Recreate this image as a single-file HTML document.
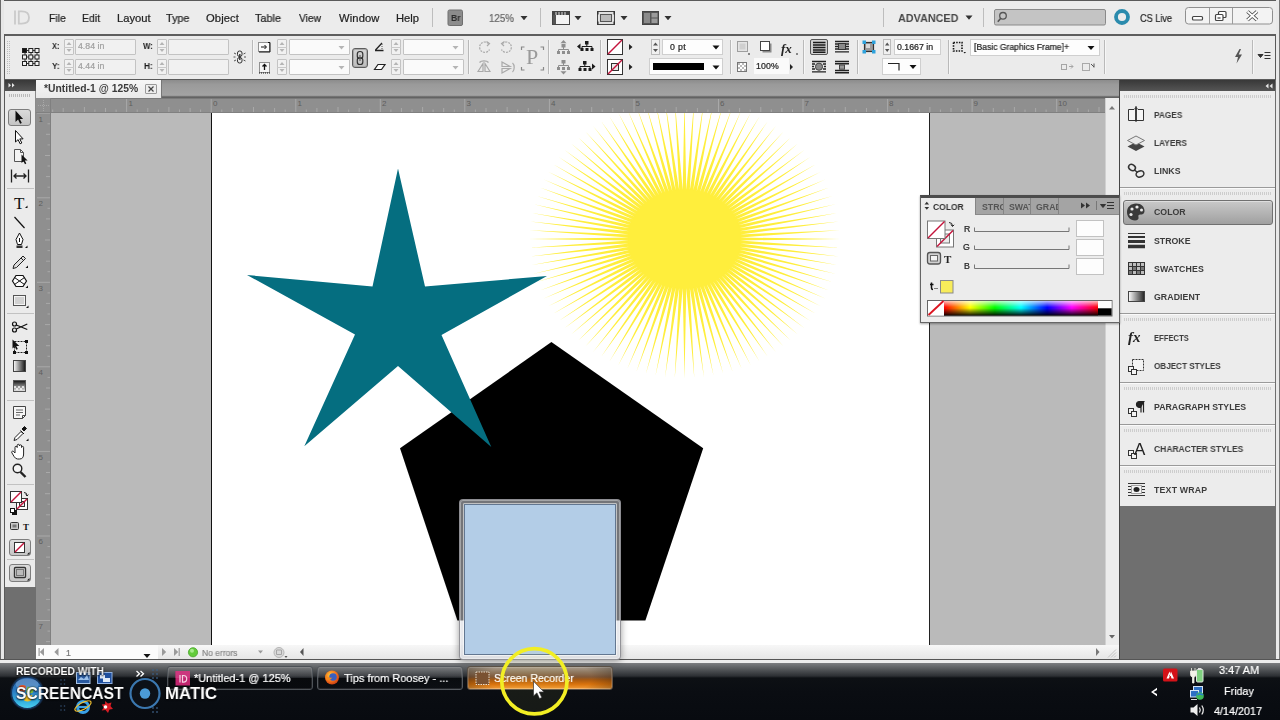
<!DOCTYPE html>
<html lang="en"><head><meta charset="utf-8"><title>Untitled-1 @ 125% - InDesign</title>
<style>
html,body{margin:0;padding:0;}
body{width:1280px;height:720px;overflow:hidden;position:relative;background:#bababa;font-family:"Liberation Sans",sans-serif;color:#2b2b2b;}
.a{position:absolute;display:block;}
.t{position:absolute;white-space:pre;line-height:1;display:block;color:#1f1f1f;transform-origin:0 50%;will-change:transform;}
svg{position:absolute;overflow:visible;}
.fld{position:absolute;box-sizing:border-box;border:1px solid #c3c3c3;background:#f1f1f1;border-radius:1px;}
.fldw{position:absolute;box-sizing:border-box;border:1px solid #cfcfcf;background:#fdfdfd;}
.vsep{position:absolute;width:1px;background:#b9b9b9;box-shadow:1px 0 0 #f6f6f6;}
</style></head><body>
<!-- document area -->
<div class="a" style="left:50px;top:112px;width:1056px;height:534px;background:#bababa;overflow:hidden;">
  <!-- page -->
  <div class="a" style="left:161px;top:1px;width:717px;height:560px;background:#fff;border-left:1px solid #111;border-right:1px solid #222;"></div>
</div>
<svg width="1280" height="720" viewBox="0 0 1280 720" style="left:0;top:0;">
  <defs><clipPath id="docclip"><rect x="50" y="113" width="1056" height="532"/></clipPath><filter id="soft" x="-5%" y="-5%" width="110%" height="110%"><feGaussianBlur stdDeviation="0.55"/></filter></defs>
  <g clip-path="url(#docclip)">
    <polygon fill="#ffee3c" filter="url(#soft)" points="684.5,99.5 686.3,190.0 694.3,99.8 689.8,190.2 704.0,100.6 693.3,190.6 713.6,102.0 696.7,191.2 723.2,103.9 700.1,191.9 732.6,106.3 703.5,192.9 741.7,109.3 706.7,194.0 750.7,112.8 709.9,195.3 759.4,116.8 713.0,196.8 767.8,121.2 716.0,198.5 775.9,126.1 718.8,200.3 783.6,131.5 721.5,202.2 790.9,137.3 724.1,204.4 797.9,143.5 726.5,206.6 804.3,150.1 728.7,209.0 810.3,157.0 730.8,211.5 815.8,164.3 732.7,214.1 820.8,171.8 734.4,216.8 825.2,179.6 735.9,219.5 829.1,187.6 737.2,222.4 832.4,195.9 738.3,225.3 835.1,204.3 739.2,228.3 837.2,212.9 739.8,231.3 838.8,221.5 740.3,234.4 839.7,230.2 740.5,237.5 840.0,239.0 740.5,240.5 839.7,247.8 740.3,243.6 838.8,256.5 739.8,246.7 837.2,265.1 739.2,249.7 835.1,273.7 738.3,252.7 832.4,282.1 737.2,255.6 829.1,290.4 735.9,258.5 825.2,298.4 734.4,261.2 820.8,306.2 732.7,263.9 815.8,313.7 730.8,266.5 810.3,321.0 728.7,269.0 804.3,327.9 726.5,271.4 797.9,334.5 724.1,273.6 790.9,340.7 721.5,275.8 783.6,346.5 718.8,277.7 775.9,351.9 716.0,279.5 767.8,356.8 713.0,281.2 759.4,361.2 709.9,282.7 750.7,365.2 706.7,284.0 741.7,368.7 703.5,285.1 732.6,371.7 700.1,286.1 723.2,374.1 696.7,286.8 713.6,376.0 693.3,287.4 704.0,377.4 689.8,287.8 694.3,378.2 686.3,288.0 684.5,378.5 682.7,288.0 674.7,378.2 679.2,287.8 665.0,377.4 675.7,287.4 655.4,376.0 672.3,286.8 645.8,374.1 668.9,286.1 636.4,371.7 665.5,285.1 627.3,368.7 662.3,284.0 618.3,365.2 659.1,282.7 609.6,361.2 656.0,281.2 601.2,356.8 653.0,279.5 593.1,351.9 650.2,277.7 585.4,346.5 647.5,275.8 578.1,340.7 644.9,273.6 571.1,334.5 642.5,271.4 564.7,327.9 640.3,269.0 558.7,321.0 638.2,266.5 553.2,313.7 636.3,263.9 548.2,306.2 634.6,261.2 543.8,298.4 633.1,258.5 539.9,290.4 631.8,255.6 536.6,282.1 630.7,252.7 533.9,273.7 629.8,249.7 531.8,265.1 629.2,246.7 530.2,256.5 628.7,243.6 529.3,247.8 628.5,240.5 529.0,239.0 628.5,237.5 529.3,230.2 628.7,234.4 530.2,221.5 629.2,231.3 531.8,212.9 629.8,228.3 533.9,204.3 630.7,225.3 536.6,195.9 631.8,222.4 539.9,187.6 633.1,219.5 543.8,179.6 634.6,216.8 548.2,171.8 636.3,214.1 553.2,164.3 638.2,211.5 558.7,157.0 640.3,209.0 564.7,150.1 642.5,206.6 571.1,143.5 644.9,204.4 578.1,137.3 647.5,202.2 585.4,131.5 650.2,200.3 593.1,126.1 653.0,198.5 601.2,121.2 656.0,196.8 609.6,116.8 659.1,195.3 618.3,112.8 662.3,194.0 627.3,109.3 665.5,192.9 636.4,106.3 668.9,191.9 645.8,103.9 672.3,191.2 655.4,102.0 675.7,190.6 665.0,100.6 679.2,190.2 674.7,99.8 682.7,190.0"/>
    <ellipse cx="684.5" cy="239" rx="56.5" ry="49.5" fill="#ffee3c"/>
    <polygon fill="#000" points="551.4,342.1 703.2,448.3 645.4,620.6 457.4,620.6 400,448.3"/>
    <polygon fill="#056e80" points="398,168.500 425,286.500 547,276 441.500,335 491.300,447 398,366 304.300,446.300 355,334.600 247,275 372.500,286.500"/>
  </g>
</svg>
<!-- rulers -->
<div class="a" style="left:36px;top:98px;width:1070px;height:14px;background:#8f8f8f;border-top:1px solid #7a7a7a;box-sizing:border-box;"></div>
<div class="a" style="left:36px;top:98px;width:14px;height:548px;background:#8f8f8f;"></div>
<svg width="1280" height="720" viewBox="0 0 1280 720" style="left:0;top:0;">
  <path d="M52.7 112v-2.5M63.2 112v-4M73.8 112v-2.5M84.4 112v-5M94.9 112v-2.5M105.5 112v-4M116.1 112v-2.5M126.6 112v-13M137.2 112v-2.5M147.8 112v-4M158.4 112v-2.5M168.9 112v-5M179.5 112v-2.5M190.1 112v-4M200.6 112v-2.5M211.2 112v-13M221.8 112v-2.5M232.3 112v-4M242.9 112v-2.5M253.5 112v-5M264.0 112v-2.5M274.6 112v-4M285.2 112v-2.5M295.8 112v-13M306.3 112v-2.5M316.9 112v-4M327.5 112v-2.5M338.0 112v-5M348.6 112v-2.5M359.2 112v-4M369.7 112v-2.5M380.3 112v-13M390.9 112v-2.5M401.4 112v-4M412.0 112v-2.5M422.6 112v-5M433.1 112v-2.5M443.7 112v-4M454.3 112v-2.5M464.8 112v-13M475.4 112v-2.5M486.0 112v-4M496.6 112v-2.5M507.1 112v-5M517.7 112v-2.5M528.3 112v-4M538.8 112v-2.5M549.4 112v-13M560.0 112v-2.5M570.5 112v-4M581.1 112v-2.5M591.7 112v-5M602.2 112v-2.5M612.8 112v-4M623.4 112v-2.5M634.0 112v-13M644.5 112v-2.5M655.1 112v-4M665.7 112v-2.5M676.2 112v-5M686.8 112v-2.5M697.4 112v-4M707.9 112v-2.5M718.5 112v-13M729.1 112v-2.5M739.6 112v-4M750.2 112v-2.5M760.8 112v-5M771.3 112v-2.5M781.9 112v-4M792.5 112v-2.5M803.0 112v-13M813.6 112v-2.5M824.2 112v-4M834.8 112v-2.5M845.3 112v-5M855.9 112v-2.5M866.5 112v-4M877.0 112v-2.5M887.6 112v-13M898.2 112v-2.5M908.7 112v-4M919.3 112v-2.5M929.9 112v-5M940.4 112v-2.5M951.0 112v-4M961.6 112v-2.5M972.1 112v-13M982.7 112v-2.5M993.3 112v-4M1003.9 112v-2.5M1014.4 112v-5M1025.0 112v-2.5M1035.6 112v-4M1046.1 112v-2.5M1056.7 112v-13M1067.3 112v-2.5M1077.8 112v-4M1088.4 112v-2.5M1099.0 112v-5" stroke="#a9a9a9" stroke-width="1" fill="none"/>
  <path d="M50 113.2h-13M50 123.8h-2.5M50 134.3h-4M50 144.9h-2.5M50 155.5h-5M50 166.0h-2.5M50 176.6h-4M50 187.2h-2.5M50 197.8h-13M50 208.3h-2.5M50 218.9h-4M50 229.5h-2.5M50 240.0h-5M50 250.6h-2.5M50 261.2h-4M50 271.7h-2.5M50 282.3h-13M50 292.9h-2.5M50 303.4h-4M50 314.0h-2.5M50 324.6h-5M50 335.1h-2.5M50 345.7h-4M50 356.3h-2.5M50 366.8h-13M50 377.4h-2.5M50 388.0h-4M50 398.6h-2.5M50 409.1h-5M50 419.7h-2.5M50 430.3h-4M50 440.8h-2.5M50 451.4h-13M50 462.0h-2.5M50 472.5h-4M50 483.1h-2.5M50 493.7h-5M50 504.2h-2.5M50 514.8h-4M50 525.4h-2.5M50 536.0h-13M50 546.5h-2.5M50 557.1h-4M50 567.7h-2.5M50 578.2h-5M50 588.8h-2.5M50 599.4h-4M50 609.9h-2.5M50 620.5h-13M50 631.1h-2.5M50 641.6h-4" stroke="#a9a9a9" stroke-width="1" fill="none"/>
  <path d="M36 112.5H1106M50.5 98V646" stroke="#808080" stroke-width="1" fill="none"/>
  <path d="M38 105.5h11M43.5 100v11" stroke="#a8a8a8" stroke-width="1" stroke-dasharray="1 1" fill="none"/>
  <g font-family="Liberation Sans, sans-serif" font-size="8" fill="#5e5e5e">
    <text x="128.5" y="106">1</text><text x="213" y="106">0</text><text x="297.5" y="106">1</text><text x="382" y="106">2</text>
    <text x="466.5" y="106">3</text><text x="551" y="106">4</text><text x="635.5" y="106">5</text><text x="720" y="106">6</text>
    <text x="804.5" y="106">7</text><text x="889" y="106">8</text><text x="973.5" y="106">9</text><text x="1058" y="106">10</text>
    <text x="38.5" y="122">1</text><text x="38.5" y="206">2</text><text x="38.5" y="291">3</text><text x="38.5" y="375">4</text>
    <text x="38.5" y="460">5</text><text x="38.5" y="544">6</text><text x="38.5" y="629">7</text>
  </g>
</svg>
<!-- vertical scrollbar -->
<div class="a" style="left:1105px;top:98px;width:14px;height:548px;background:#ececec;border-left:1px solid #d0d0d0;box-sizing:border-box;"></div>
<svg width="14" height="548" style="left:1105px;top:98px;"><path d="M4 11.5l3-3.5 3 3.5z" fill="#777"/><path d="M4 537l3 3.5 3-3.5z" fill="#666"/></svg>
<!-- status / horizontal scrollbar -->
<div class="a" style="left:36px;top:645px;width:1083px;height:14px;background:linear-gradient(#f7f7f7,#e6e6e6);"></div>
<div class="a" style="left:36px;top:645px;width:122px;height:14px;background:#fbfbfb;"></div>
<svg width="1280" height="720" viewBox="0 0 1280 720" style="left:0;top:0;">
  <g fill="#9a9a9a">
    <path d="M38.5 648v8h1.2v-8zM44 648v8l-4.2-4z"/>
    <path d="M58.5 648v8l-4.2-4z"/>
    <path d="M162 648v8l4.2-4z"/>
    <path d="M174 648v8l4.2-4zM178.6 648v8h1.2v-8z"/>
    <path d="M300 652l3.5-4v8z" fill="#555"/>
    <path d="M1096 648v8l3.5-4z" fill="#777"/>
    <path d="M258 650.5h5l-2.5 3z"/>
  </g>
  <path d="M143.5 654h7l-3.5 4z" fill="#111"/>
  <circle cx="193" cy="652.3" r="4.600" fill="#62cb3a" stroke="#4aa42c" stroke-width=".8"/>
  <circle cx="192" cy="650.800" r="2" fill="#a6ea8c"/>
  <circle cx="279" cy="652.5" r="5" fill="#d9d9d9" stroke="#b5b5b5"/>
  <path d="M276.5 650h5v4.5h-5z" fill="none" stroke="#a5a5a5"/>
  <path d="M284.5 656h3l-1.5 2z" fill="#555"/>
  <path d="M1108 657.5l8-8M1111 657.5l5-5M1114 657.5l2-2" stroke="#c2c2c2" stroke-width="1"/>
</svg>
<!-- window chrome: menu bar -->
<div class="a" style="left:0;top:0;width:1280px;height:35px;background:#ececec;border-top:1px solid #5a5a5a;box-sizing:border-box;"></div>
<div class="a" style="left:0;top:34px;width:1280px;height:2px;background:#5e5e5e;"></div>
<!-- control panel -->
<div class="a" style="left:0;top:36px;width:1280px;height:43px;background:#ebebeb;"></div>
<div class="a" style="left:0;top:79px;width:1280px;height:1px;background:#5a5a5a;"></div>
<!-- tab bar -->
<div class="a" style="left:0;top:80px;width:1280px;height:18px;background:linear-gradient(#8c8c8c 0,#9a9a9a 25%,#a3a3a3 85%,#6a6a6a 93%,#5e5e5e 100%);"></div>
<div class="a" style="left:36px;top:80px;width:126px;height:18px;background:linear-gradient(#f6f6f6,#e9e9e9);border-right:1px solid #777;box-sizing:border-box;"></div>
<div class="a" style="left:145px;top:84px;width:12px;height:10px;border:1px solid #9a9a9a;box-sizing:border-box;background:#ededed;border-radius:1px;"></div>
<svg width="12" height="10" style="left:145px;top:84px;"><path d="M3.5 2.5l5 5M8.5 2.5l-5 5" stroke="#444" stroke-width="1.2"/></svg>
<!-- left/right window borders -->
<div class="a" style="left:0;top:0;width:4px;height:663px;background:#e6e6e6;border-left:1px solid #6a6a6a;box-sizing:border-box;"></div>
<div class="a" style="left:4px;top:35px;width:1px;height:625px;background:#5a5a5a;"></div>
<div class="a" style="left:1276px;top:0;width:4px;height:663px;background:#e9e9e9;border-right:1px solid #777;box-sizing:border-box;"></div>
<div class="a" style="left:1275px;top:35px;width:1px;height:625px;background:#5a5a5a;"></div>
<div class="a" style="left:0;top:659px;width:1280px;height:1px;background:#555;"></div>
<div class="a" style="left:0;top:660px;width:1280px;height:3px;background:#ececec;"></div>

<!-- menu bar widgets -->
<svg width="1280" height="36" viewBox="0 0 1280 36" style="left:0;top:0;">
  <!-- ID logo -->
  <g fill="none" stroke="#cacaca" stroke-width="1.8"><path d="M15 10.500v14"/><path d="M18.800 11.400h3c5.500 0 7.200 2.900 7.200 6.100s-1.700 6.100-7.200 6.100h-3z"/></g>
  <!-- separators -->
  <g stroke="#bdbdbd"><path d="M432.500 8v19M540.500 8v19M883.500 8v19M983.500 8v19"/></g>
  <!-- Br -->
  <rect x="448" y="10" width="14.500" height="15.500" rx="1.500" fill="#8c8c8c" stroke="#6f6f6f"/>
  <!-- dropdown arrows -->
  <g fill="#333"><path d="M520.500 16h7l-3.500 4.200zM574.500 16h7l-3.500 4.200zM620.500 16h7l-3.500 4.200zM664.500 16h7l-3.500 4.200zM965.500 15.500h7l-3.500 4.200z"/></g>
  <!-- view options icon -->
  <g><rect x="552.500" y="11.500" width="17" height="13" fill="#f4f4f4" stroke="#444"/><rect x="553" y="12" width="16" height="3" fill="#444"/><path d="M556 12v3M559 12v3M562 12v3M565 12v3" stroke="#ddd"/><rect x="553" y="15" width="3" height="9" fill="#555"/></g>
  <!-- screen mode icon -->
  <g><rect x="597.500" y="11.500" width="17" height="13" fill="#e0e0e0" stroke="#444"/><rect x="600.500" y="14.500" width="11" height="7" fill="#bbb" stroke="#555"/><path d="M598 11.500v3M614 11.500v3M598 21.500v3M614 21.500v3" stroke="#222"/></g>
  <!-- arrange docs icon -->
  <g><rect x="642.500" y="11.500" width="16" height="13" fill="#555" stroke="#444"/><rect x="644" y="13" width="6" height="10" fill="#8a8a8a"/><rect x="651.500" y="13" width="6" height="4.500" fill="#9a9a9a"/><rect x="651.500" y="18.500" width="6" height="4.500" fill="#9a9a9a"/></g>
  <!-- search -->
  <rect x="994.500" y="9.500" width="111" height="15.500" rx="1.500" fill="#c4c4c4" stroke="#8a8a8a"/>
  <circle cx="1003" cy="15.800" r="3.300" fill="none" stroke="#555" stroke-width="1.300"/><path d="M1000.800 18.300l-3 3.500" stroke="#555" stroke-width="1.600"/>
  <!-- CS Live ring -->
  <circle cx="1122" cy="17" r="6" fill="none" stroke="#2b8bad" stroke-width="3.800"/>
  <!-- window buttons -->
  <rect x="1185.500" y="7.500" width="87" height="16.500" rx="3" fill="#f3f3f3" stroke="#8f8f8f"/>
  <path d="M1209.500 8v16M1232.500 8v16" stroke="#9c9c9c"/>
  <rect x="1192.500" y="16.500" width="10" height="3.500" rx="1" fill="#fff" stroke="#444" stroke-width="1.200"/>
  <rect x="1218.500" y="11.500" width="7.500" height="6" rx="1" fill="#fff" stroke="#444" stroke-width="1.200"/><rect x="1215.500" y="14.500" width="7.500" height="6" rx="1" fill="#fff" stroke="#444" stroke-width="1.200"/><rect x="1217.500" y="17" width="3" height="2" fill="#888"/>
  <path d="M1247.500 11.500l9.500 8.500M1257 11.500l-9.500 8.500" stroke="#4a4a4a" stroke-width="3.600"/><path d="M1247.500 11.500l9.500 8.500M1257 11.500l-9.500 8.500" stroke="#fff" stroke-width="1.700"/>
</svg>

<!-- control panel widgets -->
<!-- disabled fields -->
<div class="fld" style="left:64px;top:39px;width:10px;height:16px;"></div><div class="fld" style="left:75px;top:39px;width:61px;height:16px;"></div>
<div class="fld" style="left:64px;top:59px;width:10px;height:16px;"></div><div class="fld" style="left:75px;top:59px;width:61px;height:16px;"></div>
<div class="fld" style="left:157px;top:39px;width:10px;height:16px;"></div><div class="fld" style="left:168px;top:39px;width:61px;height:16px;"></div>
<div class="fld" style="left:157px;top:59px;width:10px;height:16px;"></div><div class="fld" style="left:168px;top:59px;width:61px;height:16px;"></div>
<div class="fld" style="left:277px;top:39px;width:10px;height:16px;"></div><div class="fld" style="left:289px;top:39px;width:61px;height:16px;background:#fafafa;"></div>
<div class="fld" style="left:277px;top:59px;width:10px;height:16px;"></div><div class="fld" style="left:289px;top:59px;width:61px;height:16px;background:#fafafa;"></div>
<div class="fld" style="left:391px;top:39px;width:10px;height:16px;"></div><div class="fld" style="left:403px;top:39px;width:61px;height:16px;background:#fafafa;"></div>
<div class="fld" style="left:391px;top:59px;width:10px;height:16px;"></div><div class="fld" style="left:403px;top:59px;width:61px;height:16px;background:#fafafa;"></div>
<!-- enabled fields -->
<div class="fldw" style="left:651px;top:39px;width:9px;height:16px;background:#f0f0f0;border-color:#bbb;"></div><div class="fldw" style="left:662px;top:39px;width:61px;height:16px;"></div>
<div class="fldw" style="left:649px;top:58px;width:74px;height:17px;"></div>
<div class="a" style="left:653px;top:63px;width:51px;height:7px;background:#000;"></div>
<div class="a" style="left:754px;top:58px;width:35px;height:16px;background:#fafafa;"></div>
<div class="fldw" style="left:883px;top:39px;width:8px;height:16px;background:#f0f0f0;border-color:#bbb;"></div><div class="fldw" style="left:894px;top:39px;width:47px;height:16px;"></div>
<div class="fldw" style="left:882px;top:58px;width:39px;height:17px;"></div>
<div class="fldw" style="left:970px;top:39px;width:130px;height:17px;"></div>
<div class="vsep" style="left:252px;top:40px;height:34px;"></div><div class="vsep" style="left:468px;top:40px;height:34px;"></div>
<div class="vsep" style="left:548px;top:40px;height:34px;"></div><div class="vsep" style="left:600px;top:40px;height:34px;"></div>
<div class="vsep" style="left:730px;top:40px;height:34px;"></div><div class="vsep" style="left:803px;top:40px;height:34px;"></div>
<div class="vsep" style="left:857px;top:40px;height:34px;"></div><div class="vsep" style="left:948px;top:40px;height:34px;"></div>
<div class="vsep" style="left:1104px;top:40px;height:34px;"></div><div class="vsep" style="left:1252px;top:40px;height:34px;"></div>
<!-- chain button -->
<div class="a" style="left:352px;top:48px;width:16px;height:20px;box-sizing:border-box;border:1px solid #5c5c5c;border-radius:3px;background:linear-gradient(#d6d6d6,#bdbdbd);box-shadow:inset 0 0 0 1px #a9a9a9;"></div>
<!-- text wrap selected -->
<div class="a" style="left:810px;top:39px;width:18px;height:16px;box-sizing:border-box;border:1px solid #555;border-radius:2px;background:#d2d2d2;"></div>
<svg width="1280" height="80" viewBox="0 0 1280 80" style="left:0;top:0;">
  <!-- grip -->
  <path d="M7.500 41v34M9.500 41v34" stroke="#bdbdbd" stroke-dasharray="1 1"/>
  <!-- reference point -->
  <g fill="#f2f2f2" stroke="#222" stroke-width="1">
    <path d="M25 50.500h12M25 57h12M25 63.500h12M25 50.500v13M31 50.500v13M37 50.500v13" fill="none" stroke="#333"/>
    <rect x="22.500" y="48.500" width="4" height="4" fill="#111"/><rect x="28.800" y="48.500" width="4" height="4"/><rect x="35" y="48.500" width="4" height="4"/>
    <rect x="22.500" y="55" width="4" height="4"/><rect x="28.800" y="55" width="4" height="4"/><rect x="35" y="55" width="4" height="4"/>
    <rect x="22.500" y="61.500" width="4" height="4"/><rect x="28.800" y="61.500" width="4" height="4"/><rect x="35" y="61.500" width="4" height="4"/>
  </g>
  <!-- spinner arrows disabled -->
  <g fill="#b5b5b5">
    <path d="M66.500 45l2.500-3 2.500 3zM66.500 49l2.500 3 2.500-3zM66.500 65l2.500-3 2.500 3zM66.500 69l2.500 3 2.500-3z"/>
    <path d="M159.500 45l2.500-3 2.500 3zM159.500 49l2.500 3 2.500-3zM159.500 65l2.500-3 2.500 3zM159.500 69l2.500 3 2.500-3z"/>
    <path d="M279.500 45l2.500-3 2.500 3zM279.500 49l2.500 3 2.500-3zM279.500 65l2.500-3 2.500 3zM279.500 69l2.500 3 2.500-3z"/>
    <path d="M393.500 45l2.500-3 2.500 3zM393.500 49l2.500 3 2.500-3zM393.500 65l2.500-3 2.500 3zM393.500 69l2.500 3 2.500-3z"/>
    <path d="M338.500 46h6l-3 3.500zM338.500 66h6l-3 3.500zM452.500 46h6l-3 3.500zM452.500 66h6l-3 3.500z"/>
  </g>
  <path d="M64 47.500h10M64 67.500h10M157 47.500h10M157 67.500h10M277 47.500h10M277 67.500h10M391 47.500h10M391 67.500h10" stroke="#c9c9c9"/>
  <!-- constrain (broken chain) -->
  <g stroke="#333" fill="none"><rect x="237.500" y="51" width="4.500" height="5.500" rx="2"/><rect x="237.500" y="57.500" width="4.500" height="5.500" rx="2"/><path d="M239.800 54v6" stroke-width="1.400"/><path d="M234 53l2 1M234 61l2-1M245.500 53l-2 1M245.500 61l-2-1M233.500 57h2M244 57h2" stroke="#555"/></g>
  <!-- select container/content -->
  <g><rect x="258.500" y="42.500" width="11" height="9" fill="#fafafa" stroke="#333" stroke-dasharray="1 1"/><path d="M268 42.500h2v9.500h-11" stroke="#111" fill="none"/><path d="M261 47h5M264.500 45l2 2-2 2" stroke="#111" fill="none"/></g>
  <g><rect x="259.500" y="62.500" width="10" height="10" fill="#f5f5f5" stroke="#333" stroke-dasharray="1 1"/><path d="M259 73h11" stroke="#111" stroke-dasharray="1 1"/><path d="M264.500 70v-5M262.500 66.500l2-2 2 2" stroke="#111" fill="none" stroke-width="1.300"/></g>
  <!-- chain icon -->
  <g stroke="#333" fill="none" stroke-width="1.200"><rect x="357.300" y="51.500" width="5.500" height="7" rx="2.600"/><rect x="357.300" y="57.500" width="5.500" height="7" rx="2.600"/><path d="M360 55v6" stroke="#666"/></g>
  <!-- rotate / shear -->
  <path d="M375 50.500h8.500M375.500 50l6.500-7" stroke="#222" fill="none" stroke-width="1.300"/><path d="M382 44v6" stroke="#555" stroke-dasharray="1 1"/>
  <path d="M374.500 69.500h7l3.500-5h-7z" stroke="#222" fill="#fff" stroke-width="1.200"/>
  <!-- rotate cw / ccw / flips (disabled) -->
  <g stroke="#a9a9a9" fill="none" stroke-width="1.200">
    <path d="M488.500 43.500a5.200 5.200 0 1 0 1 6" stroke-dasharray="2 1"/><path d="M486.500 41.500l3 2-2.500 2.500" />
    <path d="M502.500 43.500a5.200 5.200 0 1 1-1 6" stroke-dasharray="2 1"/><path d="M504.500 41.500l-3 2 2.500 2.500"/>
    <path d="M478 71.500l5-8v8zM490 71.500l-5-8v8z"/><path d="M479.500 62.500a5 3 0 0 1 9 0"/>
    <path d="M502 62l8 4.500h-8zM502 73l8-4.500h-8z"/><path d="M512.500 63a3 5 0 0 1 0 9"/>
    <path d="M521.500 50v-3h3M543.500 50v-3h-3M521.500 67v3h3M543.500 67v3h-3" stroke="#888"/>
  </g>
  <!-- select prev/next object icons -->
  <g stroke="#8e8e8e" fill="#8e8e8e"><path d="M563.500 40l3 3.200h-6z" stroke="none"/><rect x="562" y="44.500" width="3" height="2.500"/><path d="M563.500 47v2.500M558.500 51v-1.500h10v1.500" fill="none"/><rect x="557.500" y="51.500" width="2" height="2"/><rect x="562.500" y="51.500" width="2" height="2"/><rect x="567.500" y="51.500" width="2" height="2"/></g>
  <g stroke="#8e8e8e" fill="#8e8e8e"><rect x="562" y="60.500" width="3" height="2.500"/><path d="M563.500 63v2.500M558.500 67v-1.500h10v1.500" fill="none"/><rect x="557.500" y="67.500" width="2" height="2"/><rect x="562.500" y="67.500" width="2" height="2"/><rect x="567.500" y="67.500" width="2" height="2"/><path d="M563.500 74.500l3-3.200h-6z" stroke="none"/></g>
  <g stroke="#1a1a1a" fill="#1a1a1a"><path d="M577 46.500l3.500-3v6z" stroke="none"/><rect x="585.500" y="41.500" width="2.500" height="2.500"/><path d="M586.800 44v2.500M582 48.500v-2h10v2" fill="none"/><rect x="581" y="48.500" width="2" height="2"/><rect x="586" y="48.500" width="2" height="2"/><rect x="591" y="48.500" width="2" height="2"/></g>
  <g stroke="#1a1a1a" fill="#1a1a1a"><path d="M595.500 66.500l-3.500-3v6z" stroke="none"/><rect x="583.500" y="61.500" width="2.500" height="2.500"/><path d="M584.800 64v2.500M580 68.500v-2h10v2" fill="none"/><rect x="579" y="68.500" width="2" height="2"/><rect x="584" y="68.500" width="2" height="2"/><rect x="589" y="68.500" width="2" height="2"/></g>
  <!-- fill / stroke swatches -->
  <rect x="607.500" y="39.500" width="15" height="15" fill="#fff" stroke="#333"/><path d="M608 54l14-14" stroke="#c4143c" stroke-width="1.500"/>
  <rect x="607.500" y="59.500" width="15" height="15" fill="#fff" stroke="#333"/><rect x="611.500" y="63.500" width="7" height="7" fill="#ebebeb" stroke="#333"/><path d="M608 74l14-14" stroke="#c4143c" stroke-width="1.500"/>
  <path d="M629 44v6l3.500-3zM629 64v6l3.500-3z" fill="#222"/>
  <!-- spinners enabled -->
  <g fill="#555"><path d="M653 45.500l2.500-3 2.500 3zM653 49l2.500 3 2.500-3zM885 45.500l2.200-3 2.200 3zM885 49l2.200 3 2.200-3z"/></g>
  <g fill="#111"><path d="M712.500 45.500h7l-3.500 4zM712.500 65.500h7l-3.500 4zM909.500 65h7l-3.500 4zM1087.500 46h7l-3.500 4z"/></g>
  <!-- effects icons -->
  <g><rect x="737.500" y="41.500" width="10" height="10" fill="#e4e4e4" stroke="#555" stroke-dasharray="1 1"/><rect x="739.500" y="43.500" width="6" height="6" fill="#cfcfcf"/><path d="M748 54h2" stroke="#222"/></g>
  <g><rect x="762.500" y="43.500" width="9" height="9" fill="#8a8a8a"/><rect x="760.500" y="41.500" width="9" height="9" fill="#fff" stroke="#444"/></g>
  <g><rect x="737.500" y="62.500" width="9" height="9" fill="#fff" stroke="#777"/><path d="M738 63h2v2h-2zM742 63h2v2h-2zM740 65h2v2h-2zM744 65h2v2h-2zM738 67h2v2h-2zM742 67h2v2h-2zM740 69h2v2h-2zM744 69h2v2h-2z" fill="#bbb"/></g>
  <path d="M790 64v6l3-3z" fill="#222"/><path d="M796 54h2" stroke="#222"/>
  <!-- text wrap icons -->
  <g stroke="#1a1a1a" stroke-width="1.500"><path d="M813 42.500h12.500M813 45h12.500M813 47.500h12.500M813 50h12.500M813 52.300h12.500" /></g>
  <g><path d="M835 41.500h14M835 44h3M846 44h3M835 46.500h3M846 46.500h3M835 49h3M846 49h3M835 51.800h14" stroke="#222" stroke-width="1.300"/><rect x="838.500" y="43.500" width="7" height="6" fill="#8a8a8a" stroke="#333"/></g>
  <g><path d="M812 61.500h14M812 64h3M823 64h3M812 66.500h2M824 66.500h2M812 69h3M823 69h3M812 71.800h14" stroke="#222" stroke-width="1.300"/><circle cx="819" cy="66.700" r="3.600" fill="#8a8a8a" stroke="#444"/></g>
  <g><path d="M835 61.500h14M835 63.800h14M835 70.500h14M835 72.800h14" stroke="#222" stroke-width="1.400"/><rect x="839.500" y="65" width="5" height="4.200" fill="#999" stroke="#444"/></g>
  <!-- corner options -->
  <rect x="864.500" y="42.500" width="9" height="9" fill="#9a9a9a" stroke="#333" stroke-width="1.200"/><rect x="866" y="44" width="4" height="4" fill="#d8d8d8"/><path d="M862.500 40.500h3.500v3.500h-3.500zM872 40.500h3.500v3.500h-3.500zM862.500 50h3.500v3.500h-3.500zM872 50h3.500v3.500h-3.500z" fill="#2ea2dc"/>
  <path d="M888 63.500h11v7" stroke="#222" fill="none" stroke-width="1.200"/>
  <!-- object style icon -->
  <rect x="953.500" y="42.500" width="8.500" height="8.500" fill="#e4e4e4" stroke="#111" stroke-width="1.600" stroke-dasharray="1.500 1.200"/><path d="M963.500 52h2.500l-1.200 1.500z" fill="#111"/>
  <g stroke="#a5a5a5" fill="none"><rect x="1061.500" y="64.500" width="5" height="5"/><path d="M1069 66.500h4M1071 64.500l2 2-2 2"/><rect x="1082.500" y="63.500" width="7" height="7" stroke="#666" stroke-dasharray="1 1"/><path d="M1091 64l3 3M1094 63.500v4" stroke="#555"/></g>
  <!-- lightning + panel menu -->
  <path d="M1239.500 49l-4.500 8h3l-1.500 6.500 5.500-9h-3.300l2.300-5.500z" fill="#555"/>
  <path d="M1258 54.500h5l-2.500 3zM1264.500 52.500h6M1264.500 55.500h6M1264.500 58.500h6" fill="#333" stroke="#333"/>
</svg>
<span class="t" style="left:781px;top:40.500px;font:italic 700 13px 'Liberation Serif',serif;color:#222;">fx</span>
<!-- left toolbar -->
<div class="a" style="left:5px;top:80px;width:31px;height:579px;background:#6f6f6f;"></div>
<div class="a" style="left:5px;top:80px;width:31px;height:11px;background:linear-gradient(#383838,#555);"></div>
<div class="a" style="left:5px;top:91px;width:31px;height:495.500px;background:#ebebeb;border-right:1px solid #8a8a8a;box-sizing:border-box;"></div>
<div class="a" style="left:8px;top:109px;width:23px;height:17px;box-sizing:border-box;border:1px solid #7d7d7d;border-radius:3px;background:linear-gradient(#dadada,#c4c4c4);"></div>
<div class="a" style="left:9px;top:539px;width:22px;height:17px;box-sizing:border-box;border:1px solid #7d7d7d;border-radius:3px;background:linear-gradient(#dcdcdc,#c6c6c6);"></div>
<div class="a" style="left:9px;top:564px;width:22px;height:18px;box-sizing:border-box;border:1px solid #7d7d7d;border-radius:3px;background:linear-gradient(#dcdcdc,#c6c6c6);"></div>
<svg width="40" height="600" viewBox="0 0 40 600" style="left:0;top:0;">
  <path d="M8.500 83l2.500 2.300-2.500 2.300zM12 83l2.500 2.300-2.500 2.300z" fill="#e8e8e8"/>
  <path d="M9 95.500h22" stroke="#b9b9b9" stroke-width="3" stroke-dasharray="1 1"/>
  <g stroke="#c2c2c2"><path d="M7 188.500h27M7 313.500h27M7 400.500h27M7 484.500h27M7 559.500h27"/></g>
  <!-- selection -->
  <path d="M15.500 110.500v11.500l2.600-2.400 2 4.200 1.700-.8-2-4.100h3.300z" fill="#111"/>
  <!-- direct selection -->
  <path d="M15.500 130.500v11.500l2.600-2.400 2 4.200 1.700-.8-2-4.100h3.300z" fill="#fff" stroke="#111" stroke-width="1"/>
  <!-- page tool -->
  <path d="M14.500 149.500h6l3 3v9h-9z" fill="#f4f4f4" stroke="#555"/><path d="M20.500 149.500v3h3" fill="none" stroke="#555"/><path d="M21.500 154.500v8.500l2-1.800 1.500 3 1.300-.6-1.500-3h2.800z" fill="#111"/>
  <!-- gap tool -->
  <path d="M11.500 169.500v13M28.500 169.500v13M14 176h12M16.500 173.500l-2.500 2.500 2.500 2.500M23.500 173.500l2.500 2.500-2.500 2.500" stroke="#222" fill="none" stroke-width="1.300"/>
  <!-- type -->
  <text x="14" y="209" font-family="Liberation Serif, serif" font-size="17" fill="#111">T</text><path d="M25 208h2.500v-2.500z" fill="#111"/>
  <!-- line -->
  <path d="M14.500 217l10 11" stroke="#111" stroke-width="1.200"/>
  <!-- pen -->
  <path d="M19.500 233l3.500 6.500-1.500 5h-4l-1.500-5z" fill="#fff" stroke="#111"/><path d="M19.500 238v4" stroke="#111"/><path d="M16.500 245.500h6v2.500h-6z" fill="#333"/><path d="M25 248h2.500v-2.500z" fill="#111"/>
  <!-- pencil -->
  <path d="M13 268.500l1-3.500 9-9 2.500 2.500-9 9z" fill="#ddd" stroke="#222"/><path d="M21 258l2.500 2.500" stroke="#222"/><path d="M25.500 268h2.500v-2.500z" fill="#111"/>
  <!-- ellipse/ polygon frame -->
  <path d="M16 275.500h7l3.500 5.500-3.500 5.500h-7l-3.500-5.500z" fill="#fff" stroke="#111" stroke-width="1.200"/><path d="M14.500 277.500l10 7M24.500 277.500l-10 7" stroke="#111"/><path d="M25.500 288h2.500v-2.500z" fill="#111"/>
  <!-- rectangle -->
  <rect x="13.500" y="295.500" width="12" height="10" fill="#d2d2d2" stroke="#555"/><rect x="14.500" y="296.500" width="10" height="8" fill="none" stroke="#f4f4f4"/><path d="M26 308h2.500v-2.500z" fill="#111"/>
  <!-- scissors -->
  <g stroke="#111" fill="none" stroke-width="1.200"><circle cx="14.500" cy="324" r="2"/><circle cx="14.500" cy="330" r="2"/><path d="M16.300 325l11 4.500M16.300 329l11-5"/></g>
  <!-- free transform -->
  <rect x="14.500" y="341.500" width="12" height="11" fill="none" stroke="#222" stroke-dasharray="2 1"/><path d="M12.500 339.500v9l2.300-2 1.500 3.300 1.500-.7-1.500-3.200h3z" fill="#111"/><path d="M25 340h3v3h-3zM25 351h3v3h-3zM13 351h3v3h-3z" fill="#111"/>
  <!-- gradient swatch -->
  <defs><linearGradient id="gsw" x1="0" x2="1"><stop offset="0" stop-color="#fff"/><stop offset="1" stop-color="#111"/></linearGradient>
  <linearGradient id="gfe" x1="0" x2="0" y1="0" y2="1"><stop offset="0" stop-color="#111"/><stop offset="1" stop-color="#eee"/></linearGradient></defs>
  <rect x="13.500" y="360.500" width="12" height="11" fill="url(#gsw)" stroke="#444"/>
  <rect x="13.500" y="380.500" width="12" height="11" fill="url(#gfe)" stroke="#555"/><path d="M14 386h2v2h-2zM18 386h2v2h-2zM22 386h2v2h-2zM16 388h2v2h-2zM20 388h2v2h-2z" fill="#fff" opacity=".7"/>
  <!-- note -->
  <path d="M13.500 406.500h12v9l-3 3h-9z" fill="#f7f7f7" stroke="#444"/><path d="M16 410h7M16 412.500h7M16 415h4" stroke="#666"/><path d="M25.500 415.500h-3v3" fill="none" stroke="#444"/>
  <!-- eyedropper -->
  <path d="M14 440.500l1-3 6-6 2 2-6 6z" fill="#fff" stroke="#222"/><path d="M20.500 430.500l3.500 3.500M22 429l2.500-2.500 2 2-2.500 2.500z" stroke="#111" fill="#111"/><path d="M26 441h2.500v-2.500z" fill="#111"/>
  <!-- hand -->
  <path d="M15 453v-5.500q0-1.200 1.100-1.200t1.100 1.200v-2q0-1.200 1.100-1.200t1.100 1.200v.5q0-1.200 1.100-1.200t1.100 1.200v1.500q0-1.100 1-1.100t1 1.100v6.500q0 5-4 5h-2q-2 0-3.500-2.500l-2.300-3.800q-.5-1.200.5-1.500t1.700.8z" fill="#fff" stroke="#222" stroke-width="1"/>
  <!-- zoom -->
  <circle cx="17.500" cy="468.500" r="4.300" fill="#f4f4f4" stroke="#222" stroke-width="1.400"/><path d="M20.500 472l5 5" stroke="#222" stroke-width="2.400"/>
  <!-- fill / stroke -->
  <rect x="16.500" y="498.500" width="11" height="11" fill="#fff" stroke="#333"/><rect x="19.500" y="501.500" width="5" height="5" fill="#ebebeb" stroke="#333"/><path d="M17 509l10-10" stroke="#c4143c" stroke-width="1.400"/>
  <rect x="10.500" y="491.500" width="11" height="11" fill="#fff" stroke="#333"/><path d="M11 502l10-10" stroke="#c4143c" stroke-width="1.400"/>
  <path d="M24 492.500q3 0 3 3M25.800 494.500l1.200 1.500 1.400-1.300" stroke="#222" fill="none"/>
  <rect x="12.500" y="510.500" width="4" height="4" fill="#111" stroke="#111"/><rect x="10.500" y="508.500" width="4" height="4" fill="#fff" stroke="#111"/>
  <!-- frame / T -->
  <rect x="10.500" y="522.500" width="8" height="7" rx="1" fill="#c8c8c8" stroke="#333"/><rect x="12.500" y="524.500" width="4" height="3" fill="#777"/>
  <text x="23" y="530" font-family="Liberation Serif, serif" font-weight="700" font-size="9" fill="#111">T</text>
  <!-- apply none -->
  <rect x="14.500" y="542.500" width="10" height="10" fill="#fff" stroke="#333"/><path d="M15 552l9-9" stroke="#c4143c" stroke-width="1.500"/><path d="M27 554.500h2.500v-2.500z" fill="#111"/>
  <!-- view mode -->
  <rect x="14.500" y="567.500" width="11" height="10" rx="1" fill="#ddd" stroke="#333" stroke-width="1.400"/><rect x="16.500" y="569.500" width="7" height="6" fill="#bbb" stroke="#777"/><path d="M27 580.500h2.500v-2.500z" fill="#111"/>
</svg>
<!-- right dock -->
<div class="a" style="left:1119px;top:80px;width:157px;height:579px;background:#6f6f6f;border-left:1px solid #454545;box-sizing:border-box;"></div>
<div class="a" style="left:1120px;top:80px;width:155px;height:11px;background:linear-gradient(#383838,#555);"></div>
<div class="a" style="left:1120px;top:91px;width:155px;height:415px;background:#ececec;"></div>
<div class="a" style="left:1123px;top:199.500px;width:150px;height:25px;box-sizing:border-box;border:1px solid #707070;border-radius:3px;background:linear-gradient(#c9c9c9,#a0a0a0);box-shadow:inset 0 1px 0 #dedede;"></div>
<svg width="1280" height="720" viewBox="0 0 1280 720" style="left:0;top:0;">
  <path d="M1268.500 83.500l-3 2.500 3 2.500zM1272.500 83.500l-3 2.500 3 2.500z" fill="#e6e6e6"/>
  <g stroke="#cdcdcd" stroke-width="3" stroke-dasharray="1 1"><path d="M1124 96.500h148M1124 193.500h148M1124 319.500h148M1124 388.500h148M1124 430.500h148M1124 471.500h148"/></g>
  <g stroke="#9a9a9a"><path d="M1120 187.500h155M1120 313.500h155M1120 382.500h155M1120 424.500h155M1120 465.500h155"/></g>
  <g stroke="#fafafa"><path d="M1120 188.500h155M1120 314.500h155M1120 383.500h155M1120 425.500h155M1120 466.500h155"/></g>
  <!-- pages -->
  <g stroke="#333" fill="#f6f6f6"><path d="M1128.500 109.500h5.500l2 -2v13h-7.500zM1143.500 109.500h-5.500l-2-2v13h7.500z"/><path d="M1136 106v16" stroke="#222"/></g>
  <!-- layers -->
  <path d="M1136 142l8.500 4.500-8.500 4.500-8.500-4.500z" fill="#444"/><path d="M1136 136l8.500 4.500-8.500 4.500-8.500-4.500z" fill="#e9e9e9" stroke="#777"/>
  <!-- links -->
  <g fill="none" stroke="#333" stroke-width="1.500"><ellipse cx="1132" cy="167.500" rx="3.600" ry="2.800" transform="rotate(35 1132 167.500)"/><ellipse cx="1140" cy="174" rx="4" ry="3" transform="rotate(-20 1140 174)"/><path d="M1134 169.500l3.500 3"/></g>
  <!-- color palette -->
  <path d="M1136 203.500c5.500 0 8.500 3.500 8.500 7.500 0 3-2.500 3.500-4 3.500-2 0-2.500 1-2 2.500.5 2-1 3.500-3.500 3.500-5 0-8-4-8-8.500 0-5 4-8.500 9-8.500z" fill="#3a3a3a"/><g fill="#e9e9e9"><circle cx="1132" cy="209" r="1.600"/><circle cx="1137" cy="207" r="1.600"/><circle cx="1141.500" cy="210" r="1.500"/><circle cx="1131" cy="214.500" r="1.600"/></g>
  <!-- stroke -->
  <g stroke="#333"><path d="M1128 233.500h17" stroke-width="1"/><path d="M1128 237h17" stroke-width="2"/><path d="M1128 241.500h17" stroke-width="3"/><path d="M1128 246.500h17" stroke-width="3.500"/></g>
  <!-- swatches -->
  <rect x="1128" y="262" width="17" height="13" fill="#333"/><g fill="#bdbdbd"><path d="M1129 263h3v3h-3zM1133 263h3v3h-3zM1137 263h3v3h-3zM1141 263h3v3h-3zM1129 267h3v3h-3zM1137 267h3v3h-3zM1141 271h3v3h-3zM1133 271h3v3h-3z"/></g><g fill="#777"><path d="M1133 267h3v3h-3zM1141 267h3v3h-3zM1129 271h3v3h-3zM1137 271h3v3h-3z"/></g>
  <!-- gradient -->
  <defs><linearGradient id="gdk" x1="0" x2="1"><stop offset="0" stop-color="#fff"/><stop offset="1" stop-color="#222"/></linearGradient></defs>
  <rect x="1128.500" y="291.500" width="16" height="10" fill="url(#gdk)" stroke="#444"/>
  <!-- object styles -->
  <g stroke="#333" fill="#f4f4f4"><rect x="1132.500" y="359.500" width="11" height="11" stroke-dasharray="2 1"/><rect x="1128.500" y="366.500" width="5" height="5"/><rect x="1131.500" y="369.500" width="5" height="5"/></g>
  <!-- paragraph styles -->
  <g stroke="#333" fill="#f4f4f4"><rect x="1128.500" y="408.500" width="5" height="5"/><rect x="1131.500" y="411.500" width="5" height="5"/></g><path d="M1141 401.500v11M1143.500 401.500v11M1144.500 401.500h-5a3 3 0 0 0 0 6h1.500" stroke="#222" fill="#222" stroke-width="1.200"/>
  <!-- character styles -->
  <g stroke="#333" fill="#f4f4f4"><rect x="1128.500" y="450.500" width="5" height="5"/><rect x="1131.500" y="453.500" width="5" height="5"/></g>
  <!-- text wrap -->
  <g stroke="#333"><path d="M1128 483.500h17M1128 486.500h3M1142 486.500h3M1128 489.500h3M1142 489.500h3M1128 492.500h3M1142 492.500h3M1128 495.500h17"/></g><rect x="1131.500" y="485.500" width="10" height="8" fill="#f4f4f4" stroke="#555" stroke-dasharray="1 1"/><ellipse cx="1136.500" cy="489.500" rx="3" ry="2.500" fill="#222"/>
</svg>
<span class="t" style="left:1128px;top:329px;font:italic 700 15px 'Liberation Serif',serif;color:#222;">fx</span>
<span class="t" style="left:1134px;top:439.500px;font:400 17px 'Liberation Sans',sans-serif;color:#222;">A</span>
<!-- floating color panel -->
<div class="a" style="left:920px;top:195px;width:200px;height:128px;background:#ececec;box-sizing:border-box;border:1px solid #666;border-top:3px solid #4c4c4c;box-shadow:0 1px 2px rgba(0,0,0,.35);"></div>
<div class="a" style="left:975px;top:198px;width:144px;height:16.500px;background:#a4a4a4;border-bottom:1px solid #8a8a8a;box-sizing:border-box;"></div>
<div class="a" style="left:975px;top:198px;width:29px;height:16px;overflow:hidden;border-left:1px solid #858585;border-right:1px solid #858585;box-sizing:border-box;"><span class="t" style="left:6px;top:4.500px;font-size:8.750px;font-weight:700;color:#555;">STROKE</span></div>
<div class="a" style="left:1004px;top:198px;width:27px;height:16px;overflow:hidden;border-right:1px solid #858585;box-sizing:border-box;"><span class="t" style="left:5px;top:4.500px;font-size:8.750px;font-weight:700;color:#555;">SWATCHES</span></div>
<div class="a" style="left:1031px;top:198px;width:28px;height:16px;overflow:hidden;border-right:1px solid #858585;box-sizing:border-box;"><span class="t" style="left:5px;top:4.500px;font-size:8.750px;font-weight:700;color:#555;">GRADIENT</span></div>
<div class="fldw" style="left:1076px;top:220px;width:28px;height:17px;border-color:#c2c2c2;"></div>
<div class="fldw" style="left:1076px;top:239px;width:28px;height:17px;border-color:#c2c2c2;"></div>
<div class="fldw" style="left:1076px;top:258px;width:28px;height:17px;border-color:#c2c2c2;"></div>
<div class="a" style="left:944px;top:300px;width:154px;height:16px;background:linear-gradient(to bottom,rgba(255,255,255,.85) 0%,rgba(255,255,255,0) 45%,rgba(0,0,0,0) 50%,#000 100%),linear-gradient(to right,#f00 0%,#ff0 17%,#0f0 33%,#0ff 50%,#00f 67%,#f0f 83%,#f00 100%);"></div>
<svg width="1280" height="720" viewBox="0 0 1280 720" style="left:0;top:0;">
  <path d="M924.500 204.500l2.300-2.800 2.300 2.800zM924.500 207l2.300 2.800 2.300-2.800z" fill="#333"/>
  <path d="M1081 202.500l4 3-4 3zM1086 202.500l4 3-4 3z" fill="#333"/><path d="M1096.500 201v9" stroke="#777"/>
  <path d="M1100.500 204.500h5l-2.500 3zM1107 202.500h7M1107 205.500h7M1107 208.500h7" fill="#333" stroke="#333"/>
  <!-- fill/stroke -->
  <rect x="936.500" y="230" width="17" height="17" fill="#fff" stroke="#777"/><rect x="940.500" y="234" width="9" height="9" fill="#ececec" stroke="#777"/><path d="M937 246.500l16-16" stroke="#c4143c" stroke-width="1.500"/>
  <rect x="927.500" y="221" width="17.500" height="17.500" fill="#fff" stroke="#777"/><path d="M928 238l16.500-16.500" stroke="#c4143c" stroke-width="1.500"/>
  <path d="M949 222.500q3.500 0 3.500 3.500M951 224.500l1.500 2 1.700-1.700" stroke="#222" fill="none"/>
  <rect x="927.500" y="252.500" width="13" height="11.500" rx="2.500" fill="#d0d0d0" stroke="#555" stroke-width="1.300"/><rect x="930.500" y="255.500" width="7" height="5.500" fill="#f2f2f2" stroke="#666"/>
  <!-- sliders -->
  <g stroke="#777" fill="none"><path d="M974.500 227.500v4h94.500v-4M974.500 245.500v4h94.500v-4M974.500 264.500v4h94.500v-4"/></g>
  <!-- t.. + swatch -->
  <path d="M931.500 282.500v5.500q0 1.500 1.500 1.500M930 284.500h3.500" stroke="#111" stroke-width="1.500" fill="none"/><path d="M934.500 288.500h1M936.500 288.500h1" stroke="#111" stroke-width="1.200"/>
  <rect x="940.500" y="280.500" width="12.500" height="12.500" fill="#f8ec5a" stroke="#8a8a8a"/>
  <!-- spectrum frame -->
  <rect x="927.500" y="300.500" width="184.500" height="15.500" fill="none" stroke="#666"/>
  <rect x="928" y="301" width="16" height="14.500" fill="#fff"/><path d="M928.500 315l15-14" stroke="#dc1420" stroke-width="1.800"/>
  <rect x="1098" y="301" width="13.500" height="7.300" fill="#fff"/><rect x="1098" y="308.300" width="13.500" height="7.200" fill="#000"/>
</svg>
<!-- taskbar -->
<div class="a" style="left:0;top:663px;width:1280px;height:57px;background:linear-gradient(to bottom,#7b7d80 0px,#55585b 6px,#2c2f33 13px,#0d1014 15px,#0a0d12 30px,#080b10 57px);"></div>
<!-- task buttons -->
<div class="a" style="left:167px;top:666px;width:146px;height:24px;box-sizing:border-box;border:1px solid #4d5257;border-radius:3px;background:linear-gradient(rgba(255,255,255,.15) 0,rgba(255,255,255,.08) 48%,rgba(0,0,0,.35) 50%,rgba(0,0,0,.25) 100%);box-shadow:inset 0 0 0 1px rgba(255,255,255,.10);"></div>
<div class="a" style="left:317px;top:666px;width:146px;height:24px;box-sizing:border-box;border:1px solid #565a5f;border-radius:3px;background:linear-gradient(rgba(255,255,255,.16) 0,rgba(255,255,255,.08) 48%,rgba(0,0,0,.25) 50%,rgba(20,20,20,.2) 100%);box-shadow:inset 0 0 0 1px rgba(255,255,255,.10);"></div>
<div class="a" style="left:467px;top:666px;width:146px;height:24px;box-sizing:border-box;border:1px solid #5e5348;border-radius:3px;background:radial-gradient(ellipse 60% 140% at 50% 50%,rgba(0,0,0,0) 60%,rgba(0,0,0,.35) 100%),linear-gradient(#aa9d8e 0,#907a62 22%,#80593a 45%,#a85a12 58%,#d8720c 78%,#ee9430 96%,#f7c080 100%);box-shadow:inset 0 0 0 1px rgba(255,255,255,.15);"></div>
<svg width="1280" height="720" viewBox="0 0 1280 720" style="left:0;top:0;">
  <defs>
    <linearGradient id="orb" x1="0" x2="0" y1="0" y2="1"><stop offset="0" stop-color="#2a62a8"/><stop offset=".45" stop-color="#2b7cc4"/><stop offset=".8" stop-color="#36b4e2"/><stop offset="1" stop-color="#4fd0f0"/></linearGradient>
    <radialGradient id="ff" cx=".4" cy=".35" r=".7"><stop offset="0" stop-color="#ffd23c"/><stop offset=".6" stop-color="#f2701a"/><stop offset="1" stop-color="#c63a12"/></radialGradient>
  </defs>
  <!-- start orb -->
  <circle cx="27.200" cy="692.800" r="17.300" fill="#16304e" opacity=".55"/><circle cx="27.200" cy="692.800" r="15.800" fill="url(#orb)" stroke="#17365c" stroke-width="1.400"/>
  <ellipse cx="27.200" cy="684.500" rx="11.500" ry="6" fill="#fff" opacity=".22"/>
  <path d="M19 686q3.500-2 7 0l-1.500 6q-3.500-2-7 0z" fill="#e8562a"/><path d="M27.500 686.500q3.500 2 7 0l-1.500 6q-3.500 2-7 0z" fill="#7fbf3c"/>
  <path d="M17 694q3.500-2 7 0l-1.500 6q-3.500-2-7 0z" fill="#3c8fd8"/><path d="M25.500 694.500q3.500 2 7 0l-1.500 6q-3.500 2-7 0z" fill="#f4c020"/>
  <!-- quick launch icons -->
  <rect x="76.500" y="672.500" width="13.500" height="11" fill="#2a5aa0" stroke="#a9c4e4"/><path d="M78 680l3-3 3 2 3-4 2 5z" fill="#9bc0ea"/>
  <rect x="97.500" y="672.500" width="14.500" height="11" fill="#1f4f9e" stroke="#8fb0e0"/><rect x="100" y="675" width="5" height="3.500" fill="#dfe9f7"/><rect x="103" y="678" width="7" height="4" fill="#dfe9f7"/>
  <path d="M136.500 671l3 2.800-3 2.800M140.500 671l3 2.800-3 2.800" stroke="#fff" stroke-width="1.300" fill="none"/>
  <g fill="#3c5f85" opacity=".8"><circle cx="153" cy="670" r="1"/><circle cx="157" cy="670" r="1"/><circle cx="153" cy="674" r="1"/><circle cx="157" cy="674" r="1"/><circle cx="153" cy="678" r="1"/><circle cx="157" cy="678" r="1"/><circle cx="153" cy="708" r="1"/><circle cx="157" cy="708" r="1"/><circle cx="153" cy="712" r="1"/><circle cx="157" cy="712" r="1"/><circle cx="61" cy="680" r=".8"/><circle cx="64.500" cy="680" r=".8"/><circle cx="61" cy="684" r=".8"/><circle cx="64.500" cy="684" r=".8"/><circle cx="61" cy="706" r=".8"/><circle cx="64.500" cy="706" r=".8"/><circle cx="61" cy="710" r=".8"/><circle cx="64.500" cy="710" r=".8"/></g>
  <!-- IE -->
  <circle cx="83" cy="707" r="5.500" fill="none" stroke="#3aa0e6" stroke-width="3"/><path d="M79 707h9" stroke="#3aa0e6" stroke-width="2.200"/><ellipse cx="83" cy="706" rx="9" ry="3.500" fill="none" stroke="#f0c030" stroke-width="1.200" transform="rotate(-28 83 706)"/>
  <!-- red icon -->
  <path d="M105 701l3 2.500 3.500-1-1 3.500 2.500 3-3.500.5-1.500 3.500-2.500-3-3.800.5 2-3-2-3 3.500-.5z" fill="#d81c24"/><circle cx="105.500" cy="707" r="1.800" fill="#fff"/>
  <!-- screencast ring -->
  <circle cx="145" cy="693.500" r="14.500" fill="#0c1118" stroke="#3b78b0" stroke-width="2.200"/><circle cx="145" cy="693.500" r="5.200" fill="#4b9cd8"/>
  <!-- ID icon -->
  <rect x="175.500" y="671" width="14.500" height="14.500" fill="#c2256f"/><rect x="175.500" y="671" width="14.500" height="7" fill="#d24488" opacity=".6"/>
  <g stroke="#f6d3e4" stroke-width="1.200" fill="none"><path d="M180 675v7.500"/><path d="M182.500 675.500h1c2.300 0 3.200 1.500 3.200 3.300s-.9 3.300-3.200 3.300h-1z"/></g>
  <!-- firefox -->
  <circle cx="332" cy="677.500" r="7" fill="url(#ff)"/><circle cx="333" cy="677" r="3.800" fill="#3a5fc0"/><path d="M325.500 675q2.500 3.500 7 2.500 -2 3-6 2.500z" fill="#f58a1c"/>
  <!-- recorder icon -->
  <rect x="476" y="672" width="13" height="12.500" fill="#7a5232" stroke="#e8dccb" stroke-width="1" stroke-dasharray="1.500 1"/>
  <!-- tray -->
  <rect x="1163" y="668.500" width="14.500" height="13" rx="1.500" fill="#d41218"/><path d="M1166.500 678.500l3-7h1.500l-2 7zM1174 678.500l-3-7h-1.500l2 7zM1169 676h3l-1.500-2.500z" fill="#fff"/>
  <path d="M1151 692l6-4.200v2.200l-3.500 2 3.500 2v2.200z" fill="#fff"/>
  <rect x="1196.500" y="669.500" width="6.500" height="12.500" rx="1" fill="#7fd07f" stroke="#dfe7df"/><rect x="1198" y="668" width="3.500" height="2" fill="#ddd"/>
  <path d="M1191.500 668v3M1195 668v3M1190.500 671h5.500v3.500q0 2-2 2.500v6h-1.500v-6q-2-.5-2-2.500z" fill="#f2f2e8" stroke="#f2f2e8" stroke-width=".8"/>
  <rect x="1193.500" y="686.500" width="9" height="7.500" fill="#2d6fc4" stroke="#d5e3f5"/><rect x="1190.500" y="690.500" width="8" height="6.500" fill="#2d6fc4" stroke="#d5e3f5"/><circle cx="1200" cy="696" r="3.800" fill="#3fb85a"/><path d="M1197 695q3-2 6 0" stroke="#2a7fd0" stroke-width="1.500" fill="none"/><path d="M1191 699.500h6" stroke="#ddd"/>
  <path d="M1190.500 707.500h3l4-3.500v12l-4-3.500h-3z" fill="#eee"/><path d="M1199.500 707.500q1.500 2.500 0 5M1201.800 705.500q3 4.500 0 9" stroke="#eee" fill="none" stroke-width="1.200"/>
</svg>

<!-- text layer -->
<span class="t" style="left:49.00px;top:13.02px;font-size:11.2px;transform:scaleX(0.9428);-webkit-text-stroke:.22px;">File</span>
<span class="t" style="left:82.00px;top:13.02px;font-size:11.2px;transform:scaleX(0.9335);-webkit-text-stroke:.22px;">Edit</span>
<span class="t" style="left:116.50px;top:13.02px;font-size:11.2px;-webkit-text-stroke:.22px;">Layout</span>
<span class="t" style="left:166.00px;top:13.02px;font-size:11.2px;transform:scaleX(0.9684);-webkit-text-stroke:.22px;">Type</span>
<span class="t" style="left:206.00px;top:13.02px;font-size:11.2px;letter-spacing:0.119px;-webkit-text-stroke:.22px;">Object</span>
<span class="t" style="left:255.00px;top:13.02px;font-size:11.2px;transform:scaleX(0.9720);-webkit-text-stroke:.22px;">Table</span>
<span class="t" style="left:298.50px;top:13.02px;font-size:11.2px;transform:scaleX(0.9149);-webkit-text-stroke:.22px;">View</span>
<span class="t" style="left:338.50px;top:13.02px;font-size:11.2px;letter-spacing:0.128px;-webkit-text-stroke:.22px;">Window</span>
<span class="t" style="left:395.50px;top:13.02px;font-size:11.2px;-webkit-text-stroke:.22px;">Help</span>
<span class="t" style="left:488.50px;top:13.19px;font-size:11px;color:#666;transform:scaleX(0.8884);-webkit-text-stroke:.22px;">125%</span>
<span class="t" style="left:450.50px;top:13.68px;font-size:9px;font-weight:700;color:#2c2c2c;transform:scaleX(0.9485);">Br</span>
<span class="t" style="left:897.50px;top:12.57px;font-size:11.5px;font-weight:700;color:#474747;transform:scaleX(0.9405);">ADVANCED</span>
<span class="t" style="left:1139.80px;top:13.19px;font-size:11px;transform:scaleX(0.8279);-webkit-text-stroke:.22px;">CS Live</span>
<span class="t" style="left:52.00px;top:42.09px;font-size:8.75px;font-weight:700;color:#1c1c1c;transform:scaleX(0.8571);">X:</span>
<span class="t" style="left:52.00px;top:61.59px;font-size:8.75px;font-weight:700;color:#1c1c1c;transform:scaleX(0.9249);">Y:</span>
<span class="t" style="left:142.50px;top:42.09px;font-size:8.75px;font-weight:700;color:#1c1c1c;transform:scaleX(0.9078);">W:</span>
<span class="t" style="left:143.80px;top:61.59px;font-size:8.75px;font-weight:700;color:#1c1c1c;transform:scaleX(0.9421);">H:</span>
<span class="t" style="left:77.80px;top:42.09px;font-size:8.75px;color:#a0a0a0;-webkit-text-stroke:.22px;">4.84 in</span>
<span class="t" style="left:77.80px;top:61.59px;font-size:8.75px;color:#a0a0a0;-webkit-text-stroke:.22px;">4.44 in</span>
<span class="t" style="left:670.00px;top:42.59px;font-size:8.75px;color:#222;letter-spacing:0.397px;-webkit-text-stroke:.22px;">0 pt</span>
<span class="t" style="left:756.00px;top:62.09px;font-size:8.75px;color:#222;letter-spacing:0.174px;-webkit-text-stroke:.22px;">100%</span>
<span class="t" style="left:896.50px;top:42.59px;font-size:8.75px;color:#222;-webkit-text-stroke:.22px;">0.1667 in</span>
<span class="t" style="left:974.00px;top:42.59px;font-size:8.75px;color:#222;transform:scaleX(0.9841);-webkit-text-stroke:.22px;">[Basic Graphics Frame]+</span>
<span class="t" style="left:526.00px;top:46.38px;font-size:22px;color:#9a9a9a;font-family:'Liberation Serif', serif;">P</span>
<span class="t" style="left:44.40px;top:84.18px;font-size:10.3px;font-weight:700;color:#3a3a3a;letter-spacing:0.029px;">*Untitled-1 @ 125%</span>
<span class="t" style="left:66.00px;top:648.59px;font-size:8.75px;color:#777;-webkit-text-stroke:.22px;">1</span>
<span class="t" style="left:202.00px;top:648.59px;font-size:8.75px;color:#8a8a8a;transform:scaleX(0.9734);-webkit-text-stroke:.22px;">No errors</span>
<span class="t" style="left:1153.70px;top:110.69px;font-size:8.75px;font-weight:700;color:#3c3c3c;transform:scaleX(0.9438);">PAGES</span>
<span class="t" style="left:1153.70px;top:138.89px;font-size:8.75px;font-weight:700;color:#3c3c3c;transform:scaleX(0.9509);">LAYERS</span>
<span class="t" style="left:1153.70px;top:167.19px;font-size:8.75px;font-weight:700;color:#3c3c3c;letter-spacing:0.078px;">LINKS</span>
<span class="t" style="left:1153.70px;top:208.39px;font-size:8.75px;font-weight:700;color:#3c3c3c;letter-spacing:0.020px;">COLOR</span>
<span class="t" style="left:1153.70px;top:236.59px;font-size:8.75px;font-weight:700;color:#3c3c3c;">STROKE</span>
<span class="t" style="left:1153.70px;top:264.79px;font-size:8.75px;font-weight:700;color:#3c3c3c;letter-spacing:0.115px;">SWATCHES</span>
<span class="t" style="left:1153.70px;top:292.99px;font-size:8.75px;font-weight:700;color:#3c3c3c;letter-spacing:0.066px;">GRADIENT</span>
<span class="t" style="left:1153.70px;top:334.19px;font-size:8.75px;font-weight:700;color:#3c3c3c;transform:scaleX(0.8727);">EFFECTS</span>
<span class="t" style="left:1153.70px;top:362.19px;font-size:8.75px;font-weight:700;color:#3c3c3c;transform:scaleX(0.9282);">OBJECT STYLES</span>
<span class="t" style="left:1153.70px;top:403.19px;font-size:8.75px;font-weight:700;color:#3c3c3c;">PARAGRAPH STYLES</span>
<span class="t" style="left:1153.70px;top:444.69px;font-size:8.75px;font-weight:700;color:#3c3c3c;transform:scaleX(0.9718);">CHARACTER STYLES</span>
<span class="t" style="left:1153.70px;top:485.69px;font-size:8.75px;font-weight:700;color:#3c3c3c;letter-spacing:0.208px;">TEXT WRAP</span>
<span class="t" style="left:932.90px;top:202.59px;font-size:8.75px;font-weight:700;color:#333;transform:scaleX(0.9712);">COLOR</span>
<span class="t" style="left:963.60px;top:224.79px;font-size:8.75px;color:#222;-webkit-text-stroke:.22px;">R</span>
<span class="t" style="left:963.30px;top:243.29px;font-size:8.75px;color:#222;-webkit-text-stroke:.22px;">G</span>
<span class="t" style="left:963.60px;top:261.59px;font-size:8.75px;color:#222;-webkit-text-stroke:.22px;">B</span>
<span class="t" style="left:944.00px;top:253.69px;font-size:11px;font-weight:700;color:#222;font-family:'Liberation Serif', serif;">T</span>
<span class="t" style="left:194.00px;top:672.81px;font-size:11.8px;color:#fff;transform:scaleX(0.9307);-webkit-text-stroke:.22px;">*Untitled-1 @ 125%</span>
<span class="t" style="left:343.80px;top:672.81px;font-size:11.8px;color:#fff;transform:scaleX(0.9295);-webkit-text-stroke:.22px;">Tips from Roosey - ...</span>
<span class="t" style="left:493.90px;top:672.81px;font-size:11.8px;color:#fff;transform:scaleX(0.8936);-webkit-text-stroke:.22px;">Screen Recorder</span>
<span class="t" style="left:1218.80px;top:664.61px;font-size:11.8px;color:#fff;transform:scaleX(0.9285);-webkit-text-stroke:.22px;">3:47 AM</span>
<span class="t" style="left:1224.00px;top:685.61px;font-size:11.8px;color:#fff;transform:scaleX(0.9091);-webkit-text-stroke:.22px;">Friday</span>
<span class="t" style="left:1214.00px;top:706.01px;font-size:11.8px;color:#fff;transform:scaleX(0.9146);-webkit-text-stroke:.22px;">4/14/2017</span>
<span class="t" style="left:16.00px;top:666.41px;font-size:10.5px;font-weight:700;color:#fff;transform:scaleX(0.9795);text-shadow:0 0 2px rgba(0,0,0,.9),0 1px 2px rgba(0,0,0,.8);">RECORDED WITH</span>
<span class="t" style="left:16.30px;top:684.84px;font-size:17.2px;font-weight:700;color:#fff;transform:scaleX(0.9078);text-shadow:0 0 2px rgba(0,0,0,.9),0 1px 2px rgba(0,0,0,.8);">SCREENCAST</span>
<span class="t" style="left:165.30px;top:684.84px;font-size:17.2px;font-weight:700;color:#fff;transform:scaleX(0.9785);text-shadow:0 0 2px rgba(0,0,0,.9),0 1px 2px rgba(0,0,0,.8);">MATIC</span>
<!-- aero thumbnail preview -->
<div class="a" style="left:459px;top:498.500px;width:162px;height:161.500px;box-sizing:border-box;border:1px solid rgba(142,142,148,.95);border-radius:4px;background:rgba(213,215,222,.545);box-shadow:0 1px 7px rgba(0,0,0,.4),inset 0 0 0 1px rgba(255,255,255,.35);"></div>
<div class="a" style="left:463px;top:502.500px;width:154px;height:153.500px;box-sizing:border-box;border:1px solid rgba(255,255,255,.55);border-radius:1px;"></div>
<div class="a" style="left:464px;top:503.500px;width:152px;height:151.500px;box-sizing:border-box;border:1px solid rgba(45,62,88,.6);background:#b3cde7;"></div>
<!-- click highlight + cursor -->
<svg width="1280" height="720" viewBox="0 0 1280 720" style="left:0;top:0;">
  <circle cx="534.400" cy="681.300" r="32.600" fill="rgba(255,255,120,.06)" stroke="#f2ee24" stroke-width="3.700"/>
  <path d="M533.500 681.200v14.800l3.400-3.100 2.600 5.700 2.300-1-2.600-5.600h4.800z" fill="#fff" stroke="#333" stroke-width=".7" stroke-linejoin="round"/>
</svg>

</body></html>
